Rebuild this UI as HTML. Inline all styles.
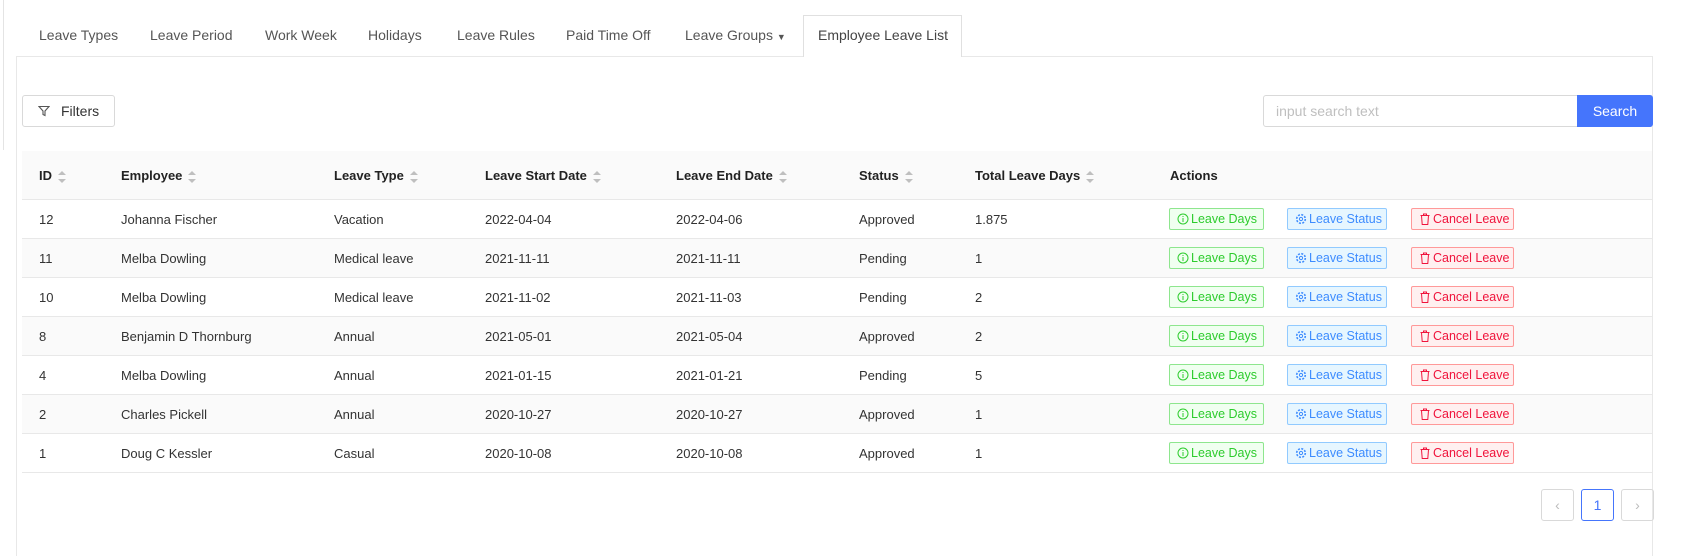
<!DOCTYPE html>
<html><head><meta charset="utf-8"><style>
*{box-sizing:border-box;margin:0;padding:0}
body{width:1682px;height:545px;background:#fff;font-family:"Liberation Sans",sans-serif;font-size:13px;color:#333;position:relative;overflow:hidden}
.a{position:absolute}
.tab{position:absolute;top:27px;font-size:14px;color:#555;white-space:nowrap}
.row{position:absolute;left:22px;width:1630px;height:39px;border-bottom:1px solid #e8e8e8}
.row span{position:absolute;top:12px;white-space:nowrap}
.hd span{font-weight:bold;color:#222;top:17px}
.srt{display:inline-block;vertical-align:middle;margin-left:6px;width:8px;height:12px;position:relative}
.srt:before,.srt:after{content:"";position:absolute;left:0;border-left:4px solid transparent;border-right:4px solid transparent}
.srt:before{top:0;border-bottom:4px solid #bfbfbf}
.srt:after{bottom:0;border-top:4px solid #bfbfbf}
.b{position:absolute;top:8px;height:22px;border:1px solid;border-radius:2px;font-size:12.5px;line-height:20px;padding-left:21px;white-space:nowrap;overflow:hidden}
.b svg{position:absolute;left:7px;top:4px}
.g{left:1147px;width:95px;border-color:#8ee68e;background:#f0fff0;color:#2dcc2d}
.bl{left:1265px;width:100px;border-color:#91caff;background:#e6f6ff;color:#3d8cff}
.r{left:1389px;width:103px;border-color:#ff9999;background:#fff0f0;color:#f0143c}
.pg{position:absolute;top:489px;width:33px;height:32px;border:1px solid #d9d9d9;border-radius:3px;text-align:center;line-height:30px;color:#bbb;font-size:14px}
</style></head><body>
<div class="a" style="left:3px;top:0;width:1px;height:150px;background:#e4e4e4"></div>
<div class="tab" style="left:39px">Leave Types</div>
<div class="tab" style="left:150px">Leave Period</div>
<div class="tab" style="left:265px">Work Week</div>
<div class="tab" style="left:368px">Holidays</div>
<div class="tab" style="left:457px">Leave Rules</div>
<div class="tab" style="left:566px">Paid Time Off</div>
<div class="tab" style="left:685px">Leave Groups <span style="font-size:9px">▼</span></div>
<div class="a" style="left:16px;top:56px;width:1637px;height:500px;border:1px solid #e8e8e8;border-bottom:none"></div>
<div class="a" style="left:803px;top:15px;width:159px;height:42px;border:1px solid #e0e0e0;border-bottom:none;background:#fff"></div>
<div class="tab" style="left:818px;color:#444">Employee Leave List</div>
<div class="a" style="left:22px;top:95px;width:93px;height:32px;border:1px solid #d9d9d9;border-radius:3px;font-size:14px;line-height:30px;padding-left:38px;color:#333">Filters
<svg class="a" style="left:15px;top:9px" width="12" height="12" viewBox="0 0 12 12"><path d="M1 1.5h10L7 6v4.5L5 9.5V6z" fill="none" stroke="#555" stroke-width="1.1"/></svg></div>
<div class="a" style="left:1263px;top:95px;width:315px;height:32px;border:1px solid #d9d9d9;border-radius:3px 0 0 3px;color:#bfbfbf;font-size:14px;line-height:30px;padding-left:12px">input search text</div>
<div class="a" style="left:1577px;top:95px;width:76px;height:32px;background:#4575fc;color:#fff;border-radius:0 3px 3px 0;font-size:14px;line-height:32px;text-align:center">Search</div>
<div class="row hd" style="top:151px;height:49px;background:#fafafa">
<span style="left:17px">ID<i class="srt"></i></span><span style="left:99px">Employee<i class="srt"></i></span><span style="left:312px">Leave Type<i class="srt"></i></span><span style="left:463px">Leave Start Date<i class="srt"></i></span><span style="left:654px">Leave End Date<i class="srt"></i></span><span style="left:837px">Status<i class="srt"></i></span><span style="left:953px">Total Leave Days<i class="srt"></i></span><span style="left:1148px">Actions</span></div>
<div id="rows"></div>
<div class="pg" style="left:1541px">‹</div>
<div class="pg" style="left:1581px;border-color:#4575fc;color:#4575fc">1</div>
<div class="pg" style="left:1621px">›</div>
<script>
var d=[["12","Johanna Fischer","Vacation","2022-04-04","2022-04-06","Approved","1.875"],["11","Melba Dowling","Medical leave","2021-11-11","2021-11-11","Pending","1"],["10","Melba Dowling","Medical leave","2021-11-02","2021-11-03","Pending","2"],["8","Benjamin D Thornburg","Annual","2021-05-01","2021-05-04","Approved","2"],["4","Melba Dowling","Annual","2021-01-15","2021-01-21","Pending","5"],["2","Charles Pickell","Annual","2020-10-27","2020-10-27","Approved","1"],["1","Doug C Kessler","Casual","2020-10-08","2020-10-08","Approved","1"]];
var xs=[17,99,312,463,654,837,953],h="";
d.forEach(function(r,i){h+='<div class="row" style="top:'+(200+i*39)+'px;'+(i%2?'background:#fafafa':'')+'">';
r.forEach(function(c,j){h+='<span style="left:'+xs[j]+'px">'+c+'</span>'});
h+='<div class="b g"><svg width="12" height="12" viewBox="0 0 12 12"><circle cx="6" cy="6" r="5" fill="none" stroke="#2dcc2d"/><path d="M6 5v4M6 3v1" stroke="#2dcc2d"/></svg>Leave Days</div>';
h+='<div class="b bl"><svg width="12" height="12" viewBox="0 0 12 12"><circle cx="6" cy="6" r="4.3" fill="none" stroke="#3d8cff" stroke-width="1.6" stroke-dasharray="2 1.4"/><circle cx="6" cy="6" r="1.6" fill="none" stroke="#3d8cff"/></svg>Leave Status</div>';
h+='<div class="b r"><svg width="12" height="12" viewBox="0 0 12 12"><path d="M1.5 2.5h9M4.5 2.5V1h3v1.5M2.5 2.5l.7 9h5.6l.7-9" fill="none" stroke="#f0143c"/></svg>Cancel Leave</div></div>'});
document.getElementById("rows").innerHTML=h;
</script>
</body></html>
